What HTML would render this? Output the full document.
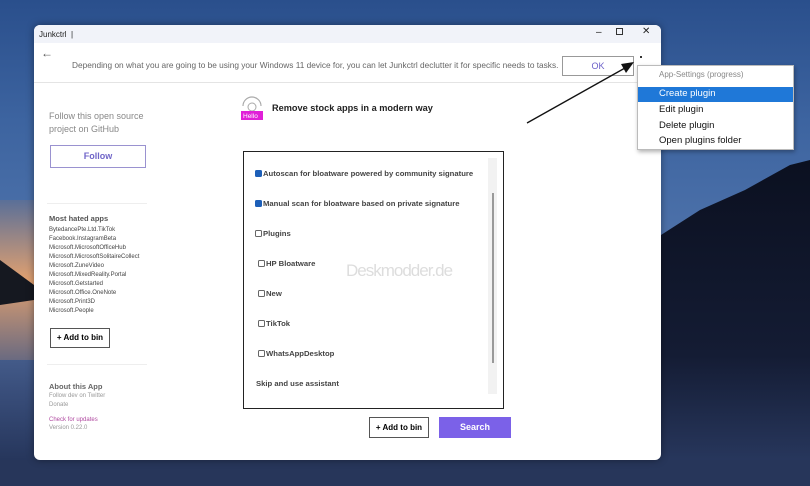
<!DOCTYPE html>
<html><head><style>
*{margin:0;padding:0;box-sizing:border-box}
body{width:810px;height:486px;overflow:hidden;position:relative;font-family:"Liberation Sans",sans-serif;
background:linear-gradient(180deg,#2a4f8c 0%,#3d64a0 25%,#4a6fa8 45%,#5a77a8 60%,#3a4f7c 80%,#1f2d50 100%);}
.t{position:absolute;font-size:8px;color:#222}
.win{position:absolute;left:34px;top:25px;width:627px;height:435px;background:#fff;border-radius:6px;overflow:hidden;box-shadow:0 0 8px rgba(0,0,0,.4)}
.tb{height:18px;background:#f1f3f9;font-size:8px;padding:5px 0 0 5px;color:#222}
.btn{position:absolute;border:1px solid #555;background:#fff;font-size:8px;font-weight:bold;text-align:center}
.cb{display:inline-block;width:7px;height:7px;border:1px solid #666;border-radius:1.5px;vertical-align:-1px;margin-right:1px}
.cb.on{background:#1d5fb8;border-color:#1d5fb8}
.menu{position:absolute;left:637px;top:65px;width:157px;height:85px;background:#fff;border:1px solid #bbb;box-shadow:1px 2px 4px rgba(0,0,0,.3);font-size:9.5px;color:#111}
.menu div{position:absolute;left:21px}
</style></head><body>
<svg style="position:absolute;left:0;top:0" width="810" height="486">
<defs><linearGradient id="s" x1="0" y1="0" x2="0" y2="1"><stop offset="0" stop-color="#5a6f98"/><stop offset=".5" stop-color="#e0a070"/><stop offset="1" stop-color="#6a6a80"/></linearGradient>
<linearGradient id="h" x1="0" y1="0" x2="0" y2="1"><stop offset="0" stop-color="#0b1020"/><stop offset=".6" stop-color="#141c34"/><stop offset="1" stop-color="#2c3d66"/></linearGradient></defs>
<rect x="0" y="200" width="34" height="160" fill="url(#s)"/>
<path d="M0 260 L34 285 L34 300 L0 305Z" fill="#151820"/>
<path d="M661 235 L700 210 L745 190 L790 165 L810 160 L810 486 L661 486Z" fill="url(#h)"/>
<rect x="0" y="460" width="810" height="26" fill="#27365a"/>
</svg>
<div class="win">
<div class="tb">Junkctrl &nbsp;|<span style="position:absolute;left:562px;top:2px;font-size:10px">–</span><span style="position:absolute;left:582px;top:3px;width:7px;height:7px;border:1px solid #333"></span><span style="position:absolute;left:608px;top:1px;font-size:10px">✕</span></div>
<div class="t" style="left:7px;top:21px;font-size:12px;color:#555">←</div>
<div class="t" style="left:38px;top:35px;color:#666;font-size:8.3px">Depending on what you are going to be using your Windows 11 device for, you can let Junkctrl declutter it for specific needs to tasks.</div>
<div class="btn" style="left:528px;top:31px;width:72px;height:20px;border-color:#999;color:#6b5fc8;font-weight:normal;font-size:9px;line-height:18px">OK</div>
<div style="position:absolute;left:0;top:57px;width:627px;border-top:1px solid #e4e4e4"></div>
<div class="t" style="left:15px;top:85px;color:#888;font-size:9px;line-height:13px">Follow this open source<br>project on GitHub</div>
<div class="btn" style="left:16px;top:120px;width:96px;height:23px;border-color:#9a92d0;color:#7065c8;font-size:9px;line-height:21px">Follow</div>
<div style="position:absolute;left:13px;top:178px;width:100px;border-top:1px solid #eee"></div>
<div class="t" style="left:15px;top:189px;font-weight:bold;color:#555;font-size:7.5px">Most hated apps</div>
<div class="t" style="left:15px;top:201px;font-size:6px;line-height:9px;color:#444">BytedancePte.Ltd.TikTok<br>Facebook.InstagramBeta<br>Microsoft.MicrosoftOfficeHub<br>Microsoft.MicrosoftSolitaireCollect<br>Microsoft.ZuneVideo<br>Microsoft.MixedReality.Portal<br>Microsoft.Getstarted<br>Microsoft.Office.OneNote<br>Microsoft.Print3D<br>Microsoft.People</div>
<div class="btn" style="left:16px;top:303px;width:60px;height:20px;line-height:18px">+ Add to bin</div>
<div style="position:absolute;left:13px;top:339px;width:100px;border-top:1px solid #eee"></div>
<div class="t" style="left:15px;top:357px;font-weight:bold;color:#666;font-size:7.5px">About this App</div>
<div class="t" style="left:15px;top:367px;font-size:6px;line-height:9px;color:#999">Follow dev on Twitter<br>Donate</div>
<div class="t" style="left:15px;top:391px;font-size:6px;line-height:9px;color:#b04aa0">Check for updates</div>
<div class="t" style="left:15px;top:400px;font-size:6px;color:#999">Version 0.22.0</div>
<svg style="position:absolute;left:206px;top:71px" width="24" height="26"><path d="M3 10 A9 9 0 0 1 21 10" fill="none" stroke="#aaa" stroke-width="1.2"/><circle cx="12" cy="11" r="4" fill="none" stroke="#aaa"/><rect x="1" y="15" width="22" height="9" fill="#e020d8"/><text x="3" y="22" font-size="6.5" fill="#fff" font-family="Liberation Sans">Hello</text></svg>
<div class="t" style="left:238px;top:78px;font-weight:bold;font-size:9.2px">Remove stock apps in a modern way</div>
<div style="position:absolute;left:209px;top:126px;width:261px;height:258px;border:1.5px solid #222"></div>
<div style="position:absolute;left:454px;top:133px;width:9px;height:236px;background:#f2f2f2"></div>
<div style="position:absolute;left:458px;top:168px;width:1.5px;height:170px;background:#999"></div>
<div class="t" style="left:221px;top:144px;font-weight:bold;color:#444;font-size:7.7px"><span class="cb on"></span>Autoscan for bloatware powered by community signature</div>
<div class="t" style="left:221px;top:174px;font-weight:bold;color:#444;font-size:7.7px"><span class="cb on"></span>Manual scan for bloatware based on private signature</div>
<div class="t" style="left:221px;top:204px;font-weight:bold;color:#444;font-size:7.7px"><span class="cb"></span>Plugins</div>
<div class="t" style="left:224px;top:234px;font-weight:bold;color:#444;font-size:7.7px"><span class="cb"></span>HP Bloatware</div>
<div class="t" style="left:224px;top:264px;font-weight:bold;color:#444;font-size:7.7px"><span class="cb"></span>New</div>
<div class="t" style="left:224px;top:294px;font-weight:bold;color:#444;font-size:7.7px"><span class="cb"></span>TikTok</div>
<div class="t" style="left:224px;top:324px;font-weight:bold;color:#444;font-size:7.7px"><span class="cb"></span>WhatsAppDesktop</div>
<div class="t" style="left:222px;top:354px;font-weight:bold;color:#444;font-size:7.7px">Skip and use assistant</div>
<div class="t" style="left:312px;top:236px;font-size:17px;color:#ddd;letter-spacing:-1px">Deskmodder.de</div>
<div class="btn" style="left:335px;top:392px;width:60px;height:21px;line-height:19px">+ Add to bin</div>
<div style="position:absolute;left:405px;top:392px;width:72px;height:21px;background:#7b61e8;color:#fff;font-size:9px;font-weight:bold;text-align:center;line-height:21px">Search</div>
</div>
<div class="menu">
<div style="top:4px;color:#888;font-size:8px">App-Settings (progress)</div>
<div style="left:0;top:21px;width:155px;height:15px;background:#1f78d8"></div>
<div style="top:22px;color:#fff">Create plugin</div>
<div style="top:38px">Edit plugin</div>
<div style="top:54px">Delete plugin</div>
<div style="top:69px">Open plugins folder</div>
</div>
<div style="position:absolute;left:640px;top:56px;width:2px;height:2px;background:#333"></div>
<svg style="position:absolute;left:0;top:0" width="810" height="486"><line x1="527" y1="123" x2="625" y2="68" stroke="#111" stroke-width="1.3"/><path d="M634 62 L621 64 L626 73Z" fill="#111"/></svg>
</body></html>
